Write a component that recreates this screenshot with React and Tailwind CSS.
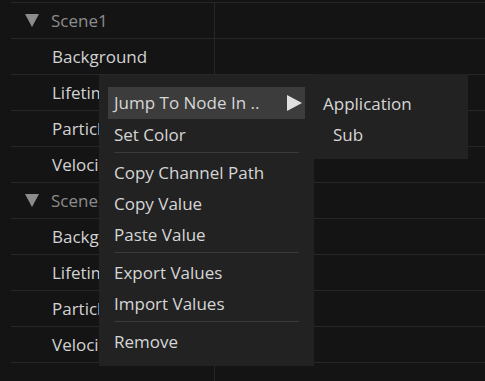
import { ChevronRight } from 'lucide-react';

const rows = [
  { label: 'Scene1', scene: true },
  { label: 'Background' },
  { label: 'Lifetime' },
  { label: 'Particles' },
  { label: 'Velocity' },
  { label: 'Scene2', scene: true },
  { label: 'Background' },
  { label: 'Lifetime' },
  { label: 'Particles' },
  { label: 'Velocity' },
  { label: '' },
];

const menu = [
  { label: 'Jump To Node In ..', sub: true, active: true },
  { label: 'Set Color' },
  'sep',
  { label: 'Copy Channel Path' },
  { label: 'Copy Value' },
  { label: 'Paste Value' },
  'sep',
  { label: 'Export Values' },
  { label: 'Import Values' },
  'sep',
  { label: 'Remove' },
];

const Row = ({ row }) => (
  <div className="flex h-[36px] border-t border-[#272727] ml-[11px]">
    <div className="w-[204px] flex items-center border-r border-[#272727]">
      {row.scene ? (
        <>
          <span className="ml-[14px] w-0 h-0 border-l-[7.5px] border-r-[7.5px] border-t-[13px] border-l-transparent border-r-transparent border-t-[#8c8c8c]" />
          <span className="ml-[12px] text-[#8c8c8c]">{row.label}</span>
        </>
      ) : (
        <span className="ml-[41px] text-[#d2d2d2]">{row.label}</span>
      )}
    </div>
    <div className="flex-1" />
  </div>
);

const ContextMenu = () => (
  <div className="absolute left-[99px] top-[75px] w-[215px] bg-[#222222] pt-[12px] pb-[9px] px-[9px] text-[#d6d6d6]">
    {menu.map((item, i) =>
      item === 'sep' ? (
        <div key={i} className="h-[7px] pt-[2px] px-[6px]">
          <div className="h-px bg-[#3a3a3a]" />
        </div>
      ) : (
        <div
          key={i}
          className={`flex items-center justify-between px-[6px] ${item.active ? 'h-[32px] bg-[#3c3c3c]' : 'h-[31px]'}`}
        >
          <span>{item.label}</span>
          {item.sub && (
            <span className="w-0 h-0 mr-[-3px] border-t-[8px] border-b-[8px] border-l-[15px] border-t-transparent border-b-transparent border-l-[#e0e0e0]" />
          )}
        </div>
      )
    )}
  </div>
);

const SubMenu = () => (
  <div className="absolute left-[314px] top-[74px] w-[154px] h-[85px] bg-[#222222] pt-[14px] text-[#d6d6d6]">
    <div className="h-[31px] flex items-center pl-[9px]">Application</div>
    <div className="h-[31px] flex items-center pl-[19px]">Sub</div>
  </div>
);

export default function App() {
  return (
    <div className="relative w-[485px] h-[381px] overflow-hidden bg-[#141414] text-[17px] font-['Open_Sans',sans-serif]">
      <div className="h-[2px]" />
      {rows.map((row, i) => (
        <Row key={i} row={row} />
      ))}
      <ContextMenu />
      <SubMenu />
    </div>
  );
}
